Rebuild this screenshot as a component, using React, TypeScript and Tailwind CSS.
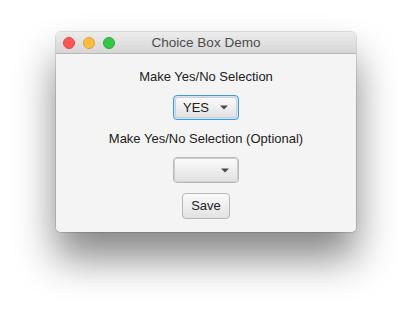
import * as React from "react"

function Arrow() {
  return (
    <svg width="8" height="5" viewBox="0 0 8 5" className="block">
      <path d="M0 0.5 H8 L4 4.5 Z" fill="#4a4a4a" />
    </svg>
  )
}

function ChoiceBox({ value, focused }: { value?: string; focused?: boolean }) {
  return (
    <div
      className={
        focused
          ? "w-[66px] h-[25px] rounded-[4px] border border-[#3d9ae6] p-[1px] bg-[#cfe4f7]"
          : "w-[66px] h-[26px] rounded-[4px] border border-[#b8b8b8]"
      }
    >
      <div className="h-full w-full rounded-[3px] bg-gradient-to-b from-[#fafafa] to-[#e2e2e2] flex items-center pl-[7px] pr-[8px] border border-[#d0d0d0]">
        <span className="flex-1 text-[13px] text-[#222]">{value}</span>
        <Arrow />
      </div>
    </div>
  )
}

export default function App() {
  return (
    <div className="w-[412px] h-[312px] bg-white pt-[32px] pl-[56px]" style={{ fontFamily: '"Liberation Sans", Arial, sans-serif' }}>
      <div className="w-[300px] rounded-[5px] overflow-hidden shadow-[0_26px_40px_rgba(0,0,0,0.48),0_0_0_1px_rgba(0,0,0,0.12)]">
        <div className="h-[22px] relative flex items-center bg-gradient-to-b from-[#ececec] to-[#d6d6d6] border-b border-[#b9b9b9]">
          <div className="flex gap-[8px] pl-[7px] pt-[1px]">
            <span className="w-[12px] h-[12px] rounded-full bg-[#fc5753] border border-[#df4744]" />
            <span className="w-[12px] h-[12px] rounded-full bg-[#fdbc40] border border-[#de9f34]" />
            <span className="w-[12px] h-[12px] rounded-full bg-[#33c748] border border-[#27aa35]" />
          </div>
          <div className="absolute inset-0 flex items-center justify-center pt-[2px] text-[13.5px] text-[#4d4d4d] pointer-events-none">
            Choice Box Demo
          </div>
        </div>
        <div className="bg-[#f4f4f4] flex flex-col items-center pt-[15px] pb-[13px]">
          <div className="text-[13px] leading-[16px] text-[#222]">Make Yes/No Selection</div>
          <div className="mt-[10px]">
            <ChoiceBox value="YES" focused />
          </div>
          <div className="mt-[11px] text-[13px] leading-[16px] text-[#222]">Make Yes/No Selection (Optional)</div>
          <div className="mt-[10px]">
            <ChoiceBox />
          </div>
          <button className="mt-[10px] w-[48px] h-[26px] rounded-[4px] border border-[#b8b8b8] bg-gradient-to-b from-[#fafafa] to-[#e2e2e2] text-[13px] text-[#222]">
            Save
          </button>
        </div>
      </div>
    </div>
  )
}
